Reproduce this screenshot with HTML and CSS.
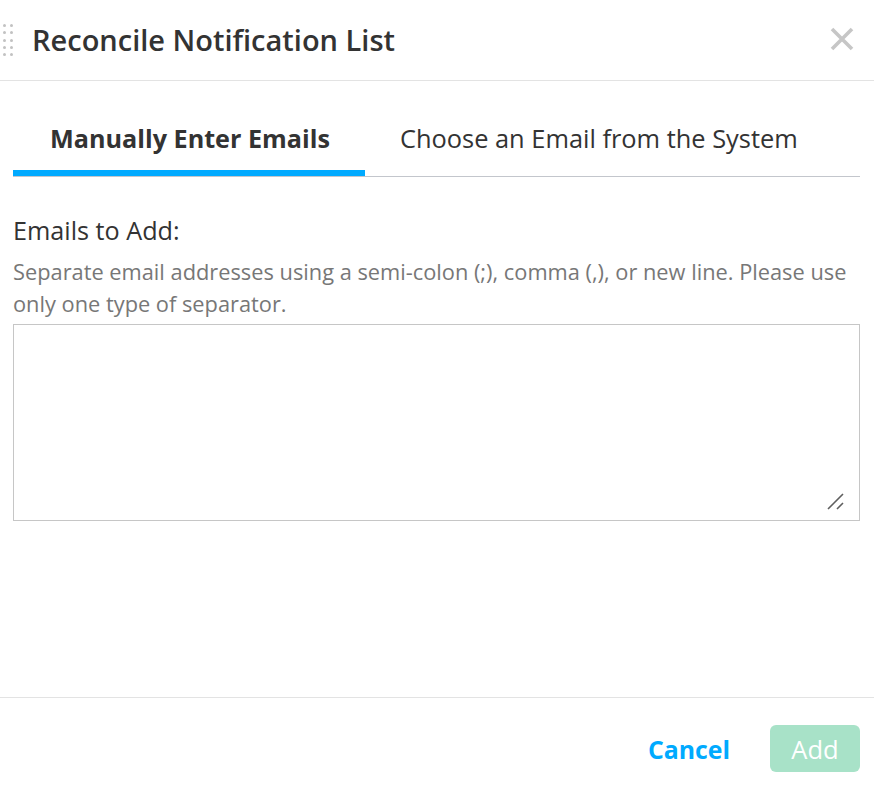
FILE: index.html
```html
<!DOCTYPE html>
<html lang="en">
<head>
<meta charset="utf-8">
<title>Reconcile Notification List</title>
<link rel="stylesheet" href="styles.css">
</head>
<body>
<div class="dialog">
  <header class="dlg-header">
    <div class="drag" aria-hidden="true">
      <span></span><span></span><span></span><span></span><span></span>
      <span></span><span></span><span></span><span></span><span></span>
    </div>
    <h1 class="title">Reconcile Notification List</h1>
    <button class="close" aria-label="Close">
      <svg width="24" height="24" viewBox="0 0 24 24"><path d="M2 2 L22 22 M22 2 L2 22" stroke="#c6c6c6" stroke-width="3.6" stroke-linecap="butt"/></svg>
    </button>
  </header>
  <main class="dlg-body">
    <nav class="tabs">
      <div class="tab active">Manually Enter Emails</div>
      <div class="tab">Choose an Email from the System</div>
    </nav>
    <label class="field-label" for="emails">Emails to Add:</label>
    <p class="help">Separate email addresses using a semi-colon (;), comma (,), or new line. Please use only one type of separator.</p>
    <div class="textarea-wrap">
      <textarea id="emails" class="emails"></textarea>
      <svg class="grip" width="18" height="18" viewBox="0 0 18 18" aria-hidden="true"><path d="M1 17 L16 2 M10 17 L16 11" stroke="#5f5f5f" stroke-width="1.6"/></svg>
    </div>
  </main>
  <footer class="dlg-footer">
    <button class="btn-cancel">Cancel</button>
    <button class="btn-add" disabled>Add</button>
  </footer>
</div>
</body>
</html>
```
FILE: styles.css
```css
html, body {
  margin: 0;
  padding: 0;
  background: #ffffff;
}
body {
  font-family: "Open Sans", "Noto Sans", sans-serif;
  color: #333333;
}
.dialog {
  width: 874px;
  height: 794px;
  display: flex;
  flex-direction: column;
}
.dlg-header {
  height: 81px;
  box-sizing: border-box;
  border-bottom: 1px solid #e3e3e3;
  display: flex;
  align-items: center;
  padding: 0 20px 0 3px;
}
.drag {
  display: grid;
  grid-template-columns: 3px 3px;
  grid-template-rows: repeat(5, 3px);
  grid-auto-flow: column;
  column-gap: 4px;
  row-gap: 4.3px;
  margin-right: 19px;
}
.drag span {
  display: block;
  width: 3px;
  height: 3px;
  background: #c2c2c2;
  border-radius: 50%;
}
.title {
  flex: 1;
  margin: 0 0 2px 0;
  font-size: 29px;
  font-weight: 600;
  color: #333333;
}
.close {
  border: 0;
  background: none;
  padding: 0;
  margin-top: -3px;
  width: 24px;
  height: 24px;
  cursor: pointer;
}
.dlg-body {
  flex: 1;
  padding: 0 14px 0 13px;
}
.tabs {
  display: flex;
  padding-top: 39px;
  border-bottom: 1px solid #c3c6cc;
}
.tab {
  font-size: 25.4px;
  line-height: 36px;
  padding: 0 36px 14px 35px;
  color: #333333;
  border-bottom: 6px solid transparent;
  white-space: nowrap;
}
.tab.active {
  font-weight: 700;
  font-size: 25.2px;
  border-bottom-color: #00aaff;
  padding-left: 37px;
  padding-right: 35px;
}
.field-label {
  display: block;
  margin-top: 37px;
  font-size: 25.2px;
  line-height: 32px;
  color: #333333;
}
.help {
  margin: 10px 0 4px 0;
  font-size: 21.8px;
  line-height: 32px;
  color: #777777;
}
.textarea-wrap {
  position: relative;
}
.emails {
  display: block;
  width: 100%;
  height: 197px;
  box-sizing: border-box;
  border: 1px solid #c6c6c6;
  border-radius: 0;
  margin: 0;
  resize: none;
  font-family: inherit;
  font-size: 18px;
}
.grip {
  position: absolute;
  right: 15px;
  bottom: 11px;
}
.dlg-footer {
  height: 97px;
  box-sizing: border-box;
  border-top: 1px solid #e3e3e3;
  display: flex;
  align-items: center;
  justify-content: flex-end;
  padding: 5px 14px 0 0;
  gap: 40px;
}
.btn-cancel {
  border: 0;
  background: none;
  padding: 0;
  font-family: inherit;
  font-size: 24.8px;
  font-weight: 700;
  color: #00aaff;
  cursor: pointer;
}
.btn-add {
  border: 0;
  width: 90px;
  height: 47px;
  border-radius: 6px;
  background: #a8e2c8;
  color: #ffffff;
  font-family: inherit;
  font-size: 25.5px;
  font-weight: 400;
  padding: 0;
}
```
